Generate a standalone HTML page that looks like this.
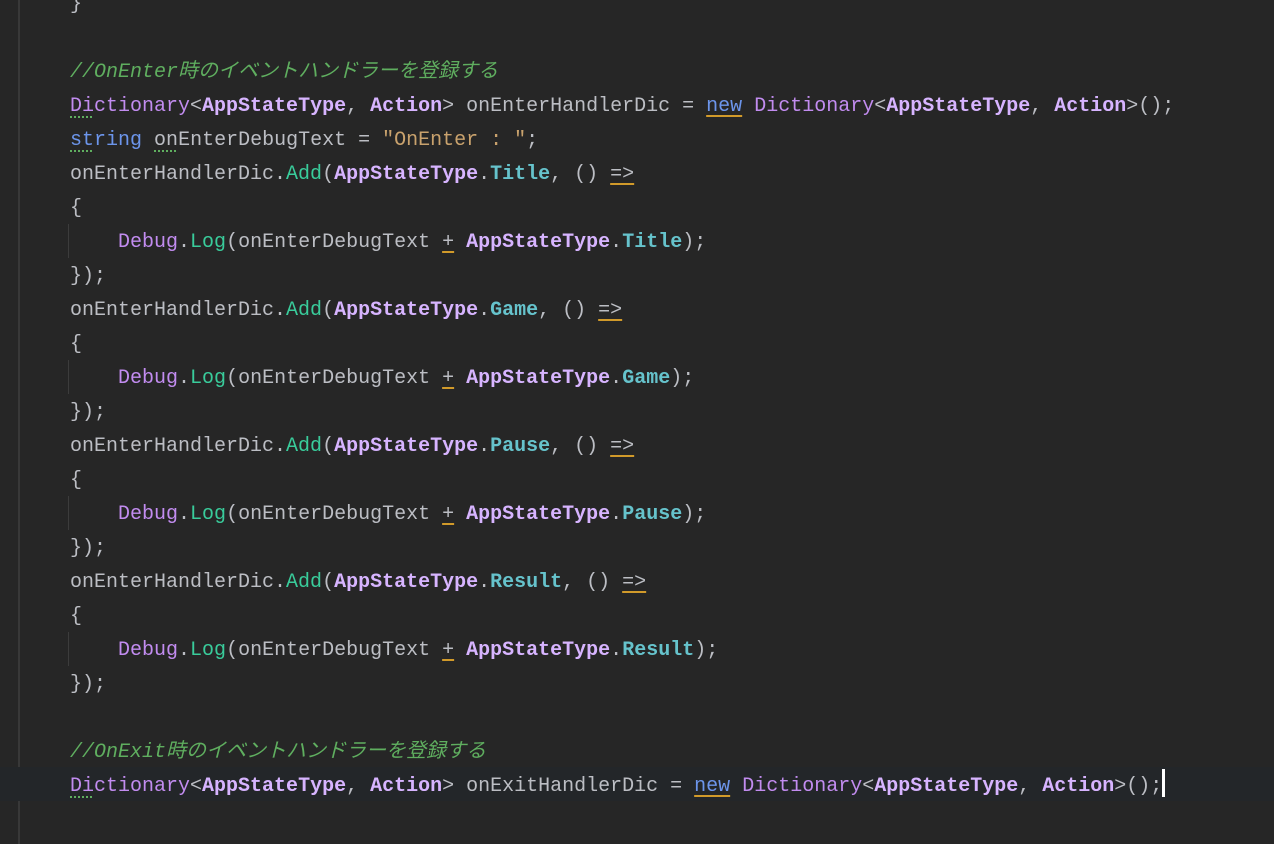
<!DOCTYPE html>
<html><head><meta charset="utf-8"><style>
html,body{margin:0;padding:0;width:1274px;height:844px;overflow:hidden;background:#262626;}
.gut{position:absolute;left:18px;top:0;width:2px;height:844px;background:#383838;}
.cur{position:absolute;left:0;top:767px;width:1274px;height:34px;background:#232629;}
.l{position:absolute;left:70px;height:34px;line-height:34px;margin-top:2px;font-family:"Liberation Mono","Noto Sans CJK JP",monospace;font-size:20px;color:#bcbec4;white-space:pre;}
.c{color:#5fae5f;font-style:italic;}
.t{color:#c28cf0;}
.b{color:#d7b4ff;font-weight:bold;}
.k{color:#6c95eb;}
.s{color:#c9a26d;}
.m{color:#39cc9b;}
.e{color:#66c3cc;font-weight:bold;}
.u{text-decoration:underline;text-decoration-color:#d19a2a;text-underline-offset:4px;}
.w{text-decoration:underline dotted #5fae5f;text-underline-offset:5px;}
.g{position:absolute;left:68px;width:1px;height:34px;background:#3c3c3c;}
.caret{position:absolute;left:1162px;top:769px;width:3px;height:28px;background:#fff;}
</style></head><body>
<div class="gut"></div>
<div class="cur"></div>
<div class="l" style="top:-14px">}</div>
<div class="l c" style="top:54px">//OnEnter時のイベントハンドラーを登録する</div>
<div class="l" style="top:88px"><span class="t"><span class="w">Di</span>ctionary</span>&lt;<span class="b">AppStateType</span>, <span class="b">Action</span>&gt; onEnterHandlerDic = <span class="k u">new</span> <span class="t">Dictionary</span>&lt;<span class="b">AppStateType</span>, <span class="b">Action</span>&gt;();</div>
<div class="l" style="top:122px"><span class="k"><span class="w">st</span>ring</span> <span class="w">on</span>EnterDebugText = <span class="s">"OnEnter : "</span>;</div>
<div class="l" style="top:156px">onEnterHandlerDic.<span class="m">Add</span>(<span class="b">AppStateType</span>.<span class="e">Title</span>, () <span class="u">=&gt;</span></div>
<div class="l" style="top:190px">{</div>
<div class="g" style="top:224px"></div>
<div class="l" style="top:224px">    <span class="t">Debug</span>.<span class="m">Log</span>(onEnterDebugText <span class="u">+</span> <span class="b">AppStateType</span>.<span class="e">Title</span>);</div>
<div class="l" style="top:258px">});</div>
<div class="l" style="top:292px">onEnterHandlerDic.<span class="m">Add</span>(<span class="b">AppStateType</span>.<span class="e">Game</span>, () <span class="u">=&gt;</span></div>
<div class="l" style="top:326px">{</div>
<div class="g" style="top:360px"></div>
<div class="l" style="top:360px">    <span class="t">Debug</span>.<span class="m">Log</span>(onEnterDebugText <span class="u">+</span> <span class="b">AppStateType</span>.<span class="e">Game</span>);</div>
<div class="l" style="top:394px">});</div>
<div class="l" style="top:428px">onEnterHandlerDic.<span class="m">Add</span>(<span class="b">AppStateType</span>.<span class="e">Pause</span>, () <span class="u">=&gt;</span></div>
<div class="l" style="top:462px">{</div>
<div class="g" style="top:496px"></div>
<div class="l" style="top:496px">    <span class="t">Debug</span>.<span class="m">Log</span>(onEnterDebugText <span class="u">+</span> <span class="b">AppStateType</span>.<span class="e">Pause</span>);</div>
<div class="l" style="top:530px">});</div>
<div class="l" style="top:564px">onEnterHandlerDic.<span class="m">Add</span>(<span class="b">AppStateType</span>.<span class="e">Result</span>, () <span class="u">=&gt;</span></div>
<div class="l" style="top:598px">{</div>
<div class="g" style="top:632px"></div>
<div class="l" style="top:632px">    <span class="t">Debug</span>.<span class="m">Log</span>(onEnterDebugText <span class="u">+</span> <span class="b">AppStateType</span>.<span class="e">Result</span>);</div>
<div class="l" style="top:666px">});</div>
<div class="l c" style="top:734px">//OnExit時のイベントハンドラーを登録する</div>
<div class="l" style="top:768px"><span class="t"><span class="w">Di</span>ctionary</span>&lt;<span class="b">AppStateType</span>, <span class="b">Action</span>&gt; onExitHandlerDic = <span class="k u">new</span> <span class="t">Dictionary</span>&lt;<span class="b">AppStateType</span>, <span class="b">Action</span>&gt;();</div>
<div class="caret"></div>
</body></html>
